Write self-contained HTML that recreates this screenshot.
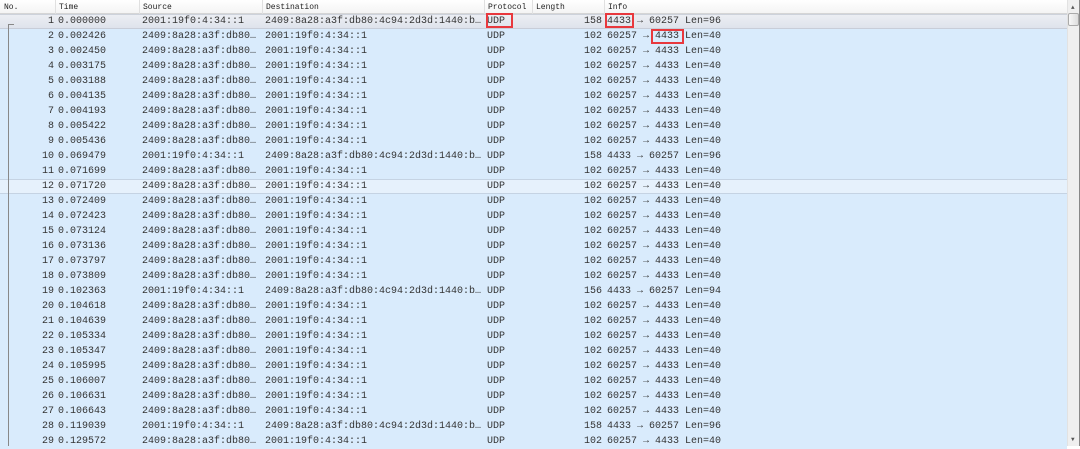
<!DOCTYPE html>
<html><head><meta charset="utf-8"><style>
*{margin:0;padding:0;box-sizing:border-box}
body{width:1080px;height:446px;overflow:hidden;background:#fff;position:relative;font-family:"Liberation Mono",monospace;font-size:10px;color:#333}
.hdr{position:absolute;left:0;top:0;width:1067px;height:14px;background:linear-gradient(#fff,#f4f4f4);border-bottom:1px solid #d5d5d5;font-size:8px;color:#222}
.hdr span{position:absolute;top:3px}
.hdr i{position:absolute;top:0;width:1px;height:14px;background:#e0e0e0}
.row{position:absolute;left:0;width:1067px;height:15px;background:#d9ebfc;line-height:15px}
.row span{position:absolute;white-space:pre}
.n{right:1013px;text-align:right}
.t{left:58px}.s{left:142px}.d{left:265px}.p{left:487px}.l{right:465px}.i{left:607px}
.r1{background:linear-gradient(#eceef3,#dfe3ec);border-top:1px solid #cdd2db;border-bottom:1px solid #c8cdd8;line-height:13px}
.r12{background:#e6f1fc;border-top:1px solid #c5d3e3;border-bottom:1px solid #c5d3e3;line-height:13px}
.box{position:absolute;border:2px solid #e8383d;z-index:5}
.sb{position:absolute;left:1067px;top:0;width:13px;height:446px;background:#efefef;border-left:1px solid #e2e2e2;border-right:1px solid #888}
</style></head><body>
<div class="hdr"><span style="left:4px">No.</span><i style="left:55px"></i><span style="left:59px">Time</span><i style="left:139px"></i><span style="left:143px">Source</span><i style="left:262px"></i><span style="left:266px">Destination</span><i style="left:484px"></i><span style="left:488px">Protocol</span><i style="left:532px"></i><span style="left:536px">Length</span><i style="left:604px"></i><span style="left:608px">Info</span></div>
<div id="rows"></div>
<div style="position:absolute;left:8px;top:25px;width:1px;height:421px;background:#888"></div>
<div style="position:absolute;left:8px;top:24px;width:6px;height:1px;background:#888"></div>
<div class="sb"><div style="position:absolute;left:3px;top:4px;font-size:6px;color:#555">▲</div><div style="position:absolute;left:0;top:13px;width:11px;height:13px;background:linear-gradient(90deg,#f8f8f8,#ddd);border:1px solid #aaa;border-radius:2px"></div><div style="position:absolute;left:3px;top:436px;font-size:6px;color:#555">▼</div></div>
<div class="box" style="left:486px;top:13px;width:27px;height:15px"></div>
<div class="box" style="left:605px;top:13px;width:29px;height:15px"></div>
<div class="box" style="left:651px;top:29px;width:33px;height:15px"></div>
<script>
var t=["0.000000","0.002426","0.002450","0.003175","0.003188","0.004135","0.004193","0.005422","0.005436","0.069479","0.071699","0.071720","0.072409","0.072423","0.073124","0.073136","0.073797","0.073809","0.102363","0.104618","0.104639","0.105334","0.105347","0.105995","0.106007","0.106631","0.106643","0.119039","0.129572"];
var h="";
for(var k=0;k<29;k++){var n=k+1,srv=(n==1||n==10||n==19||n==28);
var cls="row"+(n==1?" r1":"")+(n==12?" r12":"");
h+='<div class="'+cls+'" style="top:'+(14+k*15)+'px"><span class="n">'+n+'</span><span class="t">'+t[k]+'</span>'+
(srv?'<span class="s">2001:19f0:4:34::1</span><span class="d">2409:8a28:a3f:db80:4c94:2d3d:1440:b…</span><span class="p">UDP</span><span class="l">'+(n==19?156:158)+'</span><span class="i">4433 → 60257 Len='+(n==19?94:96)+'</span>'
:'<span class="s">2409:8a28:a3f:db80…</span><span class="d">2001:19f0:4:34::1</span><span class="p">UDP</span><span class="l">102</span><span class="i">60257 → 4433 Len=40</span>')+'</div>';}
document.getElementById("rows").innerHTML=h;
</script>
</body></html>
